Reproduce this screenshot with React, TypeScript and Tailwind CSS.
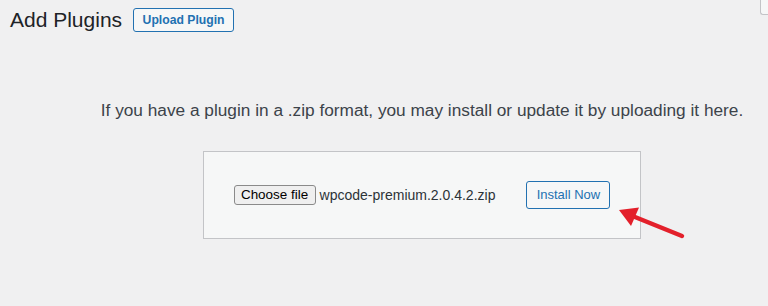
const font = { fontFamily: '"Liberation Sans", Arial, sans-serif' };

function ArrowMark() {
  return (
    <svg
      className="pointer-events-none absolute left-0 top-0"
      width="768"
      height="306"
      viewBox="0 0 768 306"
    >
      <line
        x1="682"
        y1="236"
        x2="630"
        y2="215"
        stroke="#e3202b"
        strokeWidth="4.5"
        strokeLinecap="round"
      />
      <polygon points="619,210 639,207.5 631,226" fill="#e3202b" />
    </svg>
  );
}

export default function App() {
  return (
    <div
      className="relative h-[306px] w-[768px] overflow-hidden bg-[#f0f0f1] text-[#1d2327]"
      style={font}
    >
      <div className="absolute right-0 top-0 h-[15px] w-[8px] rounded-bl-[3px] border-b border-l border-[#c3c4c7] bg-[#f6f7f7]" />

      <header className="flex h-[24px] items-center gap-[11px] pl-[10px] mt-[8px]">
        <h1 className="text-[21px] leading-[24px] font-normal">Add Plugins</h1>
        <button
          type="button"
          className="flex h-[24px] w-[101px] items-center justify-center rounded-[3px] border border-[#2271b1] bg-[#f6f7f7] text-[12.2px] font-bold text-[#2271b1]"
        >
          Upload Plugin
        </button>
      </header>

      <main className="flex flex-col items-center pl-[76px] pt-[66px]">
        <p className="text-center text-[17.25px] leading-[24px] text-[#3c434a] whitespace-nowrap">
          If you have a plugin in a .zip format, you may install or update it by uploading it here.
        </p>

        <form className="mt-[29px] flex h-[88px] w-[438px] items-center justify-center border border-[#c3c4c7] bg-[#f6f7f7]">
          <button
            type="button"
            className="flex h-[20px] w-[82px] items-center justify-center rounded-[3px] border border-[#8a8a8a] bg-[#efefef] text-[13.45px] text-black"
          >
            Choose file
          </button>
          <span className="ml-[4px] text-[14px] text-[#2c3338]">wpcode-premium.2.0.4.2.zip</span>
          <button
            type="button"
            className="ml-[31px] flex h-[28px] w-[84px] items-center justify-center rounded-[3px] border border-[#2271b1] bg-[#f6f7f7] text-[13px] text-[#2271b1]"
          >
            Install Now
          </button>
        </form>
      </main>

      <ArrowMark />
    </div>
  );
}
